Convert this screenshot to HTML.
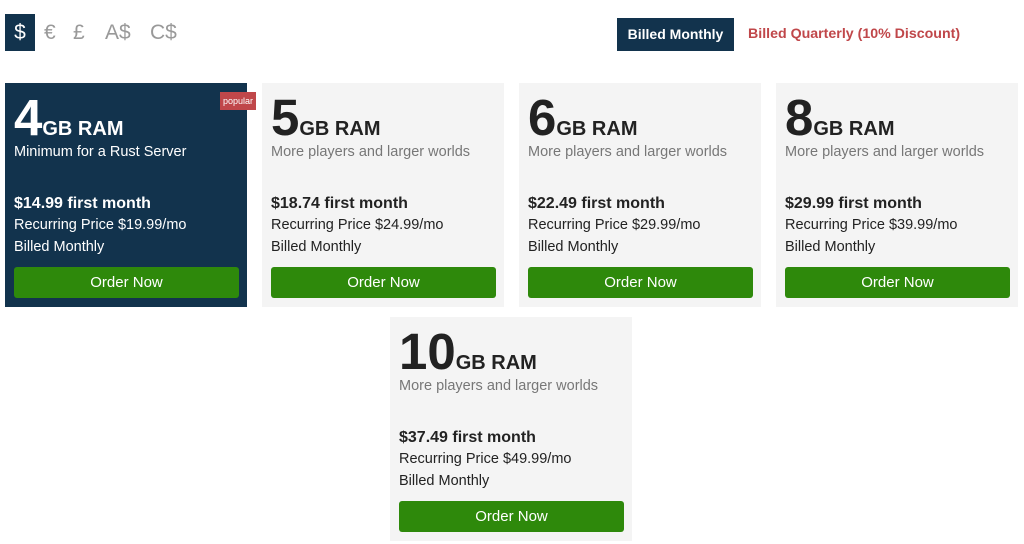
<!DOCTYPE html>
<html><head><style>
body{margin:0;width:1024px;height:544px;background:#fff;font-family:"Liberation Sans",sans-serif;position:relative;overflow:hidden}
.cur{position:absolute;top:14px;height:37px;line-height:37px;font-size:21px;color:#999}
.sel{background:#12334d;color:#fff;width:30px;left:5px;text-align:center}
.card{position:absolute;width:242px;height:224px;background:#f4f4f4;color:#222}
.card.dark{background:#12334d;color:#fff}
.big{position:absolute;left:9px;top:7px;font-size:51px;font-weight:bold;line-height:56px}
.big span{font-size:20px}
.sub{position:absolute;left:9px;top:61px;font-size:14.5px;color:#777}
.dark .sub{color:#fff}
.p1{position:absolute;left:9px;top:112px;font-size:16px;font-weight:bold}
.p2{position:absolute;left:9px;top:134px;font-size:14.5px}
.p3{position:absolute;left:9px;top:156px;font-size:14.5px}
.btn{position:absolute;left:9px;top:184px;width:225px;height:31px;background:#2e890b;color:#fff;border-radius:3px;text-align:center;line-height:31px;font-size:15px}
.pop{position:absolute;right:-9px;top:9px;background:#c0474a;color:#fff;font-size:9px;padding:4px 3px;line-height:10px}
</style></head><body>
<div class="cur sel">$</div>
<div class="cur" style="left:44px">€</div>
<div class="cur" style="left:73px">£</div>
<div class="cur" style="left:105px">A$</div>
<div class="cur" style="left:150px">C$</div>
<div style="position:absolute;left:617px;top:18px;width:117px;height:33px;background:#12334d;color:#fff;font-weight:bold;font-size:14px;line-height:33px;text-align:center">Billed Monthly</div>
<div style="position:absolute;left:748px;top:18px;height:33px;line-height:33px;color:#c0474a;font-weight:bold;font-size:14.2px">Billed Quarterly (10% Discount)</div>

<div class="card dark" style="left:5px;top:83px"><div class="pop">popular</div><div class="big">4<span>GB RAM</span></div><div class="sub">Minimum for a Rust Server</div><div class="p1">$14.99 first month</div><div class="p2">Recurring Price $19.99/mo</div><div class="p3">Billed Monthly</div><div class="btn">Order Now</div></div>
<div class="card" style="left:262px;top:83px"><div class="big">5<span>GB RAM</span></div><div class="sub">More players and larger worlds</div><div class="p1">$18.74 first month</div><div class="p2">Recurring Price $24.99/mo</div><div class="p3">Billed Monthly</div><div class="btn">Order Now</div></div>
<div class="card" style="left:519px;top:83px"><div class="big">6<span>GB RAM</span></div><div class="sub">More players and larger worlds</div><div class="p1">$22.49 first month</div><div class="p2">Recurring Price $29.99/mo</div><div class="p3">Billed Monthly</div><div class="btn">Order Now</div></div>
<div class="card" style="left:776px;top:83px"><div class="big">8<span>GB RAM</span></div><div class="sub">More players and larger worlds</div><div class="p1">$29.99 first month</div><div class="p2">Recurring Price $39.99/mo</div><div class="p3">Billed Monthly</div><div class="btn">Order Now</div></div>
<div class="card" style="left:390px;top:317px"><div class="big">10<span>GB RAM</span></div><div class="sub">More players and larger worlds</div><div class="p1">$37.49 first month</div><div class="p2">Recurring Price $49.99/mo</div><div class="p3">Billed Monthly</div><div class="btn">Order Now</div></div>
</body></html>
